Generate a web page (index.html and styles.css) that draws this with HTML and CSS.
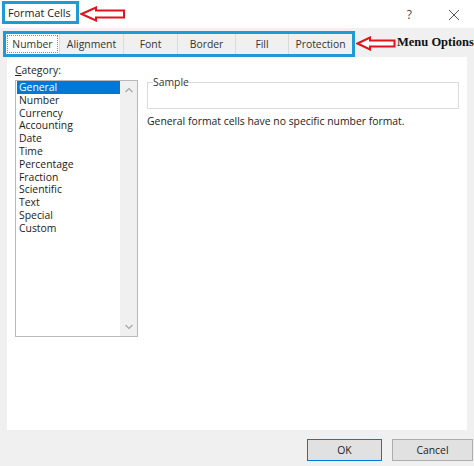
FILE: index.html
```html
<!DOCTYPE html>
<html>
<head>
<meta charset="utf-8">
<link rel="stylesheet" href="styles.css">
</head>
<body>
<div class="dialog">
  <div class="titlebar">
    <div class="titlebox">Format Cells</div>
    <svg class="arrow arrow-title" width="46" height="16" viewBox="0 0 46 16"><path d="M1.5 8 L16 1.5 L16 4.5 L44 4.5 L44 11.5 L16 11.5 L16 14.5 Z" fill="#fff" stroke="#e0141e" stroke-width="2" stroke-linejoin="miter"/></svg>
    <div class="spacer"></div>
    <span class="help">?</span>
    <svg class="close" width="12" height="12" viewBox="0 0 12 12"><path d="M1 1 L11 11 M11 1 L1 11" stroke="#555" stroke-width="1"/></svg>
  </div>
  <div class="main">
    <div class="tabrow">
      <div class="tabbox">
        <div class="tab active"><span class="tab-inner">Number</span></div>
        <div class="tab w-align">Alignment</div>
        <div class="tab w-font">Font</div>
        <div class="tab w-border">Border</div>
        <div class="tab w-fill">Fill</div>
        <div class="tab w-prot">Protection</div>
      </div>
      <svg class="arrow arrow-menu" width="40" height="15" viewBox="0 0 40 15"><path d="M1.5 7.5 L14 1.5 L14 4.5 L38.5 4.5 L38.5 10.5 L14 10.5 L14 13.5 Z" fill="#fff" stroke="#e0141e" stroke-width="2"/></svg>
      <span class="menu-label">Menu Options</span>
    </div>
    <div class="panel">
      <div class="leftcol">
        <div class="cat-label"><u>C</u>ategory:</div>
        <div class="listbox">
          <ul class="items">
            <li class="sel">General</li>
            <li>Number</li>
            <li>Currency</li>
            <li>Accounting</li>
            <li>Date</li>
            <li>Time</li>
            <li>Percentage</li>
            <li>Fraction</li>
            <li>Scientific</li>
            <li>Text</li>
            <li>Special</li>
            <li>Custom</li>
          </ul>
          <div class="scrollbar">
            <svg width="16" height="14" viewBox="0 0 16 14"><path d="M4.5 9 L8 5.5 L11.5 9" fill="none" stroke="#a6a6a6" stroke-width="1.2"/></svg>
            <svg width="16" height="14" viewBox="0 0 16 14"><path d="M4.5 5 L8 8.5 L11.5 5" fill="none" stroke="#a6a6a6" stroke-width="1.2"/></svg>
          </div>
        </div>
      </div>
      <div class="rightcol">
        <fieldset class="sample"><legend>Sample</legend></fieldset>
        <p class="desc">General format cells have no specific number format.</p>
      </div>
    </div>
  </div>
  <div class="footer">
    <button class="btn ok">OK</button>
    <button class="btn cancel">Cancel</button>
  </div>
</div>
</body>
</html>
```

FILE: styles.css
```css
* { box-sizing: border-box; }
html, body { margin: 0; padding: 0; }
body {
  font-family: "Open Sans", "Noto Sans", sans-serif;
  font-size: 10.4px;
  color: #1a1a1a;
  background: #f0f0f0;
  width: 474px;
  height: 466px;
  overflow: hidden;
}
.dialog { width: 474px; height: 466px; display: flex; flex-direction: column; }
.titlebar {
  height: 28px;
  background: #fff;
  display: flex;
  align-items: flex-start;
  padding-top: 1px;
}
.titlebox {
  margin-left: 2px;
  height: 23px;
  width: 77px;
  border: 3px solid #1e9ad6;
  padding-left: 3px;
  font-size: 10.8px;
  line-height: 17px;
  color: #222;
}
.arrow-title { margin-left: 1px; margin-top: 5px; }
.spacer { flex: 1; }
.help { margin-top: 5px; margin-right: 36px; font-size: 12px; color: #444; }
.close { margin-top: 8px; margin-right: 14px; }
.main { height: 402px; display: flex; flex-direction: column; }
.tabrow {
  height: 29px;
  display: flex;
  align-items: flex-start;
  padding-top: 3px;
  padding-left: 3px;
}
.tabbox {
  flex-shrink: 0;
  width: 352px;
  height: 26px;
  border: 3px solid #1e9ad6;
  display: flex;
  background: #f0f0f0;
}
.tab {
  height: 20px;
  display: flex;
  align-items: center;
  justify-content: center;
  border-right: 1px solid #dadada;
  color: #333;
}
.tab.active { width: 54px; background: #fff; border-right: 1px solid #dadada; padding: 1px; }
.tab-inner {
  width: 100%; height: 100%;
  border: 1px dotted #8a8a8a;
  display: flex; align-items: center; justify-content: center;
}
.w-align { width: 64px; }
.w-font { width: 54px; }
.w-border { width: 58px; }
.w-fill { width: 53px; }
.w-prot { width: 63px; border-right: none; }
.arrow-menu { flex-shrink: 0; margin-left: 1px; margin-top: 5px; }
.menu-label {
  flex-shrink: 0;
  white-space: nowrap;
  margin-left: 1px;
  margin-top: 4px;
  font-family: "Liberation Serif", "Times New Roman", serif;
  font-weight: bold;
  font-size: 12.5px;
  color: #111;
}
.panel {
  margin-left: 7px;
  width: 460px;
  height: 373px;
  background: #fff;
  display: flex;
  padding-left: 8px;
  padding-top: 6px;
}
.leftcol { width: 123px; }
.cat-label { height: 17px; line-height: 14px; color: #222; }
.listbox {
  width: 123px;
  height: 257px;
  border: 1px solid #b9b9b9;
  display: flex;
}
.items {
  list-style: none;
  margin: 0;
  padding: 0 0 0 1px;
  flex: 1;
}
.items li {
  height: 12.8px;
  line-height: 12.8px;
  padding-left: 2px;
  color: #1a1a1a;
}
.items li.sel { background: #0078d7; color: #fff; }
.scrollbar {
  width: 17px;
  background: #f0f0f0;
  display: flex;
  flex-direction: column;
  justify-content: space-between;
  padding: 2px 0 2px 1px;
}
.rightcol { margin-left: 9px; width: 312px; }
.sample {
  margin: 0;
  margin-top: 14px;
  padding: 0;
  height: 32px;
  border: 1px solid #dcdcdc;
  padding-left: 5px;
}
.sample legend {
  padding: 0;
  color: #333;
  line-height: 10px;
}
.desc { margin: 5px 0 0 0; color: #222; }
.footer {
  flex: 1;
  display: flex;
  align-items: flex-start;
  padding-top: 9px;
  padding-left: 307px;
}
.btn {
  height: 22px;
  font-family: "Open Sans", "Noto Sans", sans-serif;
  font-size: 10.4px;
  color: #222;
  background: #e1e1e1;
  border: 1px solid #adadad;
  padding: 0;
}
.ok { width: 75px; border-color: #0078d7; }
.cancel { width: 81px; margin-left: 10px; }
```
